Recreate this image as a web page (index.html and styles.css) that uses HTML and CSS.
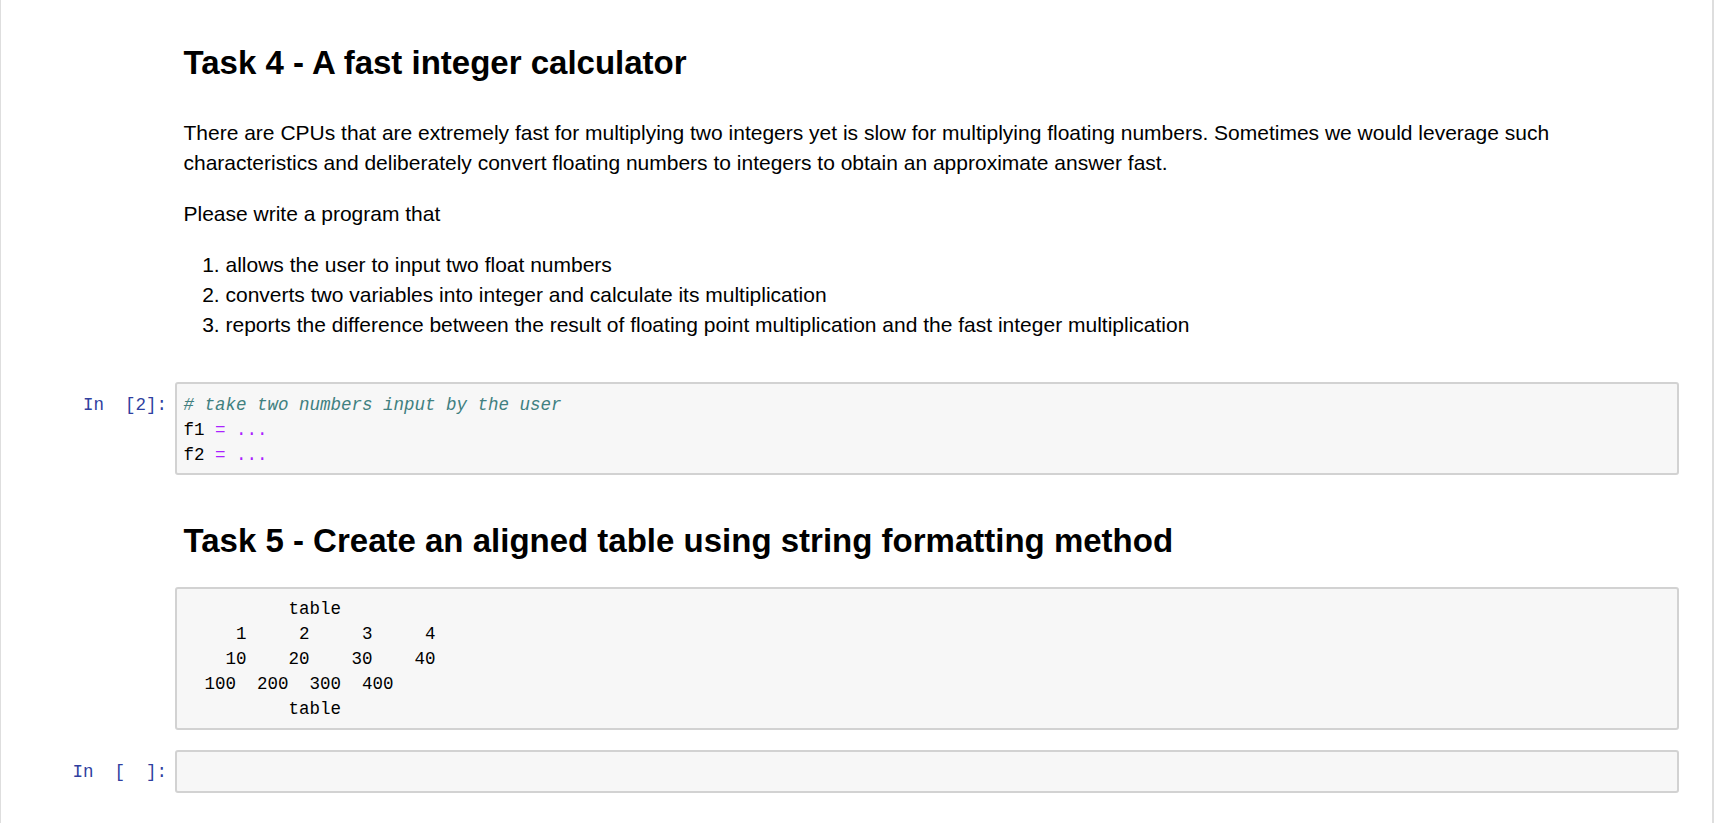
FILE: index.html
```html
<!DOCTYPE html>
<html lang="en">
<head>
<meta charset="utf-8">
<title>Notebook</title>
<link rel="stylesheet" href="styles.css">
</head>
<body>
<div class="notebook">
  <div class="cell md first-md">
    <div class="prompt"></div>
    <div class="md-body">
      <h2>Task 4 - A fast integer calculator</h2>
      <p class="lead">There are CPUs that are extremely fast for multiplying two integers yet is slow for multiplying floating numbers. Sometimes we would leverage such characteristics and deliberately convert floating numbers to integers to obtain an approximate answer fast.</p>
      <p>Please write a program that</p>
      <ol>
        <li>allows the user to input two float numbers</li>
        <li>converts two variables into integer and calculate its multiplication</li>
        <li>reports the difference between the result of floating point multiplication and the fast integer multiplication</li>
      </ol>
    </div>
  </div>

  <div class="cell code code-first">
    <div class="prompt">In  [2]:</div>
    <div class="input-area"><pre class="src"><span class="cm"># take two numbers input by the user</span>
f1 <span class="op">=</span> <span class="op">...</span>
f2 <span class="op">=</span> <span class="op">...</span></pre></div>
  </div>

  <div class="cell md second-md">
    <div class="prompt"></div>
    <div class="md-body">
      <h2>Task 5 - Create an aligned table using string formatting method</h2>
    </div>
  </div>

  <div class="cell raw">
    <div class="prompt"></div>
    <div class="input-area"><pre class="src">          table
     1     2     3     4
    10    20    30    40
  100  200  300  400
          table</pre></div>
  </div>

  <div class="cell code code-empty">
    <div class="prompt">In  [  ]:</div>
    <div class="input-area"><pre class="src"> </pre></div>
  </div>
</div>
</body>
</html>
```

FILE: styles.css
```css
html, body {
  margin: 0;
  padding: 0;
  background: #ffffff;
}

body {
  font-family: "Liberation Sans", Arial, Helvetica, sans-serif;
  color: #000000;
}

.notebook {
  box-sizing: border-box;
  width: 1714px;
  min-height: 823px;
  padding: 45px 33px 0 0;
  border-left: 1px solid #dedede;
  border-right: 2px solid #dedede;
  background: #ffffff;
}

.cell {
  display: flex;
  align-items: flex-start;
}

.prompt {
  flex: 0 0 174px;
  box-sizing: border-box;
  padding: 10.5px 8px 0 0;
  text-align: right;
  white-space: pre;
  font-family: "Liberation Mono", "Courier New", monospace;
  font-size: 17.5px;
  line-height: 25px;
  color: #303f9f;
}

.md-body {
  flex: 1 1 auto;
  padding-left: 8.5px;
  font-size: 21px;
  line-height: 30px;
}

.md-body h2 {
  margin: 0;
  font-size: 33px;
  line-height: 36px;
  font-weight: bold;
}

.md-body p {
  margin: 21px 0 0 0;
}

.md-body p.lead {
  margin-top: 36.7px;
}

.md-body ol {
  margin: 21px 0 0 0;
  padding-left: 42px;
}

.code-first {
  margin-top: 42.8px;
}

.second-md {
  margin-top: 47.8px;
}

.raw {
  margin-top: 27.4px;
}

.code-empty {
  margin-top: 20.3px;
}

.input-area {
  flex: 1 1 auto;
  box-sizing: border-box;
  background: #f7f7f7;
  border: 2px solid #d2d2d2;
  border-radius: 3px;
  padding: 8.5px 6px 5.5px 6.5px;
}

.src {
  margin: 0;
  font-family: "Liberation Mono", "Courier New", monospace;
  font-size: 17.5px;
  line-height: 25px;
  color: #000000;
  white-space: pre;
}

.cm {
  color: #408080;
  font-style: italic;
}

.op {
  color: #aa22ff;
}
```
